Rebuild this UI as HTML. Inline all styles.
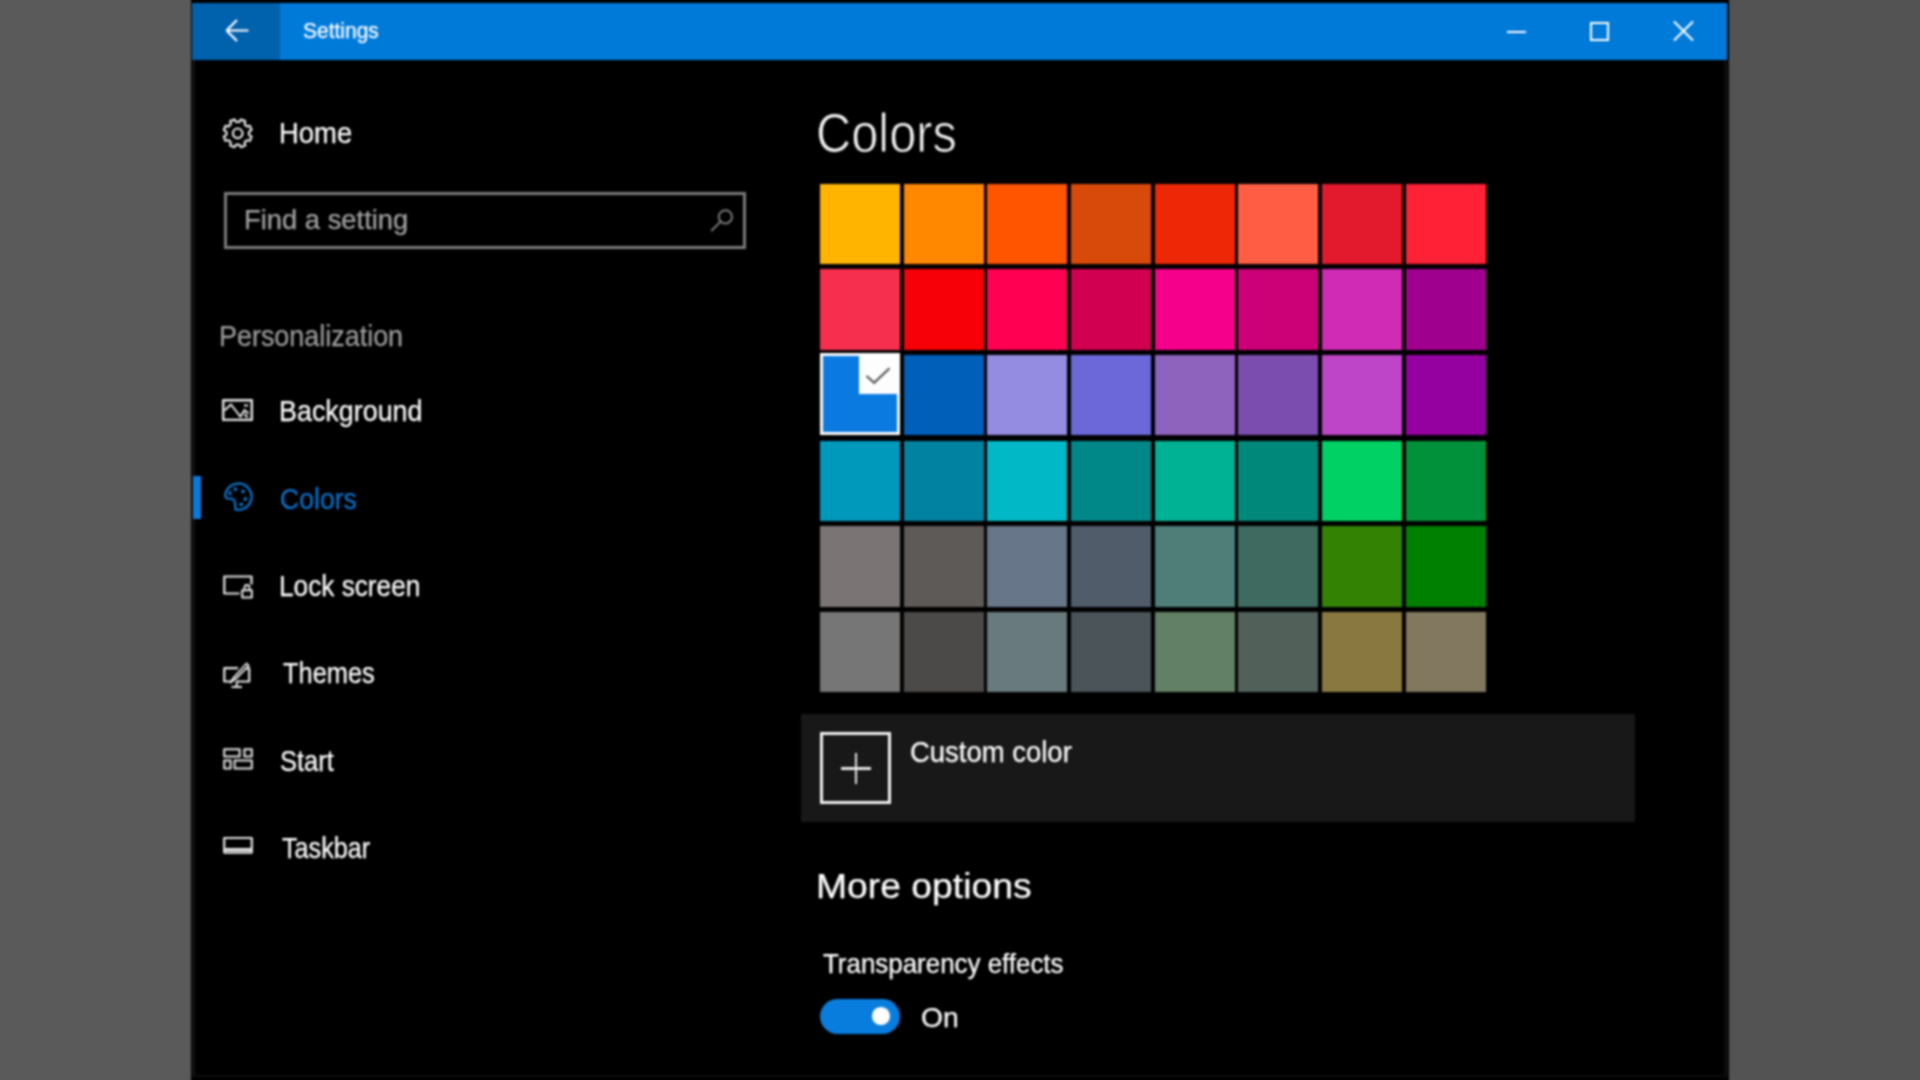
<!DOCTYPE html>
<html>
<head>
<meta charset="utf-8">
<style>
html,body{margin:0;padding:0;width:1920px;height:1080px;overflow:hidden;background:#535353;}
body{position:relative;font-family:"Liberation Sans",sans-serif;}
.abs{position:absolute;}
#wrap{position:absolute;left:-30px;top:-30px;width:1980px;height:1140px;filter:blur(0.8px);}
#inner{position:absolute;left:30px;top:30px;width:1920px;height:1080px;}
.t{position:absolute;white-space:nowrap;line-height:1;transform-origin:0 0;color:#fff;}
#win{position:absolute;left:191px;top:-30px;width:1538px;height:1140px;background:#000;}
#tb{position:absolute;left:192px;top:3px;width:1535px;height:57px;background:#007ad9;}
#back{position:absolute;left:192px;top:3px;width:88px;height:57px;background:#0061ad;}
.sw{position:absolute;width:80.2px;height:80.6px;}
</style>
</head>
<body>
<div id="wrap"><div id="inner">
<div class="abs" style="left:-30px;top:-30px;width:221px;height:1140px;background:#5a5a5a"></div>
<div class="abs" style="left:1729px;top:-30px;width:221px;height:1140px;background:#535353"></div>
<div id="win"></div>
<div class="abs" style="left:192px;top:60px;width:2.5px;height:1017px;background:#121212"></div>
<div class="abs" style="left:192px;top:1075px;width:1535px;height:2px;background:#0d0d0d"></div>
<div class="abs" style="left:1724px;top:60px;width:4px;height:1017px;background:#0c0c0c"></div>
<div id="tb"></div>
<div id="back"></div>


<!-- window controls -->
<div class="abs" style="left:1507px;top:31px;width:19px;height:2px;background:#fff"></div>
<div class="abs" style="left:1590px;top:22px;width:15px;height:15px;border:2px solid #fff"></div>

<!-- sidebar -->

<div class="abs" style="left:223.7px;top:192.1px;width:516.6px;height:51.2px;border:3px solid #7a7a7a"></div>


<div class="abs" style="left:193px;top:476px;width:8px;height:43px;background:#0a7ad8"></div>

<!-- content -->

<!--GRID--><div id="grid">
<div class="sw" style="left:819.8px;top:183.7px;background:#FFB400"></div>
<div class="sw" style="left:903.5px;top:183.7px;background:#FF8800"></div>
<div class="sw" style="left:987.2px;top:183.7px;background:#FF5400"></div>
<div class="sw" style="left:1070.9px;top:183.7px;background:#D84A0A"></div>
<div class="sw" style="left:1154.6px;top:183.7px;background:#EE2806"></div>
<div class="sw" style="left:1238.3px;top:183.7px;background:#FF5E45"></div>
<div class="sw" style="left:1322.0px;top:183.7px;background:#E31A2E"></div>
<div class="sw" style="left:1405.7px;top:183.7px;background:#FF2136"></div>
<div class="sw" style="left:819.8px;top:269.3px;background:#F72F4E"></div>
<div class="sw" style="left:903.5px;top:269.3px;background:#F80007"></div>
<div class="sw" style="left:987.2px;top:269.3px;background:#FF0052"></div>
<div class="sw" style="left:1070.9px;top:269.3px;background:#D10050"></div>
<div class="sw" style="left:1154.6px;top:269.3px;background:#F4008A"></div>
<div class="sw" style="left:1238.3px;top:269.3px;background:#CC0077"></div>
<div class="sw" style="left:1322.0px;top:269.3px;background:#D02BB4"></div>
<div class="sw" style="left:1405.7px;top:269.3px;background:#A0008E"></div>
<div class="sw" style="left:819.7px;top:352.9px;height:82.4px;width:80.1px;background:#fdfdfd"></div>
<div class="abs" style="left:823.0px;top:356.0px;width:73.6px;height:75.6px;background:#0a79e0"></div>
<div class="abs" style="left:859.0px;top:356.0px;width:37.6px;height:37.6px;background:#fdfdfd"></div>
<svg class="abs" style="left:859.8px;top:356.9px" width="36" height="36" viewBox="0 0 36 36"><path d="M6.5 19 L14.2 25.8 L29.5 11.2" fill="none" stroke="#555" stroke-width="2.2"/></svg>
<div class="sw" style="left:903.5px;top:354.9px;background:#005FB8"></div>
<div class="sw" style="left:987.2px;top:354.9px;background:#938CE0"></div>
<div class="sw" style="left:1070.9px;top:354.9px;background:#6C68D9"></div>
<div class="sw" style="left:1154.6px;top:354.9px;background:#8E63BE"></div>
<div class="sw" style="left:1238.3px;top:354.9px;background:#7B4DAE"></div>
<div class="sw" style="left:1322.0px;top:354.9px;background:#BE45C8"></div>
<div class="sw" style="left:1405.7px;top:354.9px;background:#9500A0"></div>
<div class="sw" style="left:819.8px;top:440.5px;background:#0099BC"></div>
<div class="sw" style="left:903.5px;top:440.5px;background:#0082A0"></div>
<div class="sw" style="left:987.2px;top:440.5px;background:#00B8C6"></div>
<div class="sw" style="left:1070.9px;top:440.5px;background:#008788"></div>
<div class="sw" style="left:1154.6px;top:440.5px;background:#00B294"></div>
<div class="sw" style="left:1238.3px;top:440.5px;background:#00887A"></div>
<div class="sw" style="left:1322.0px;top:440.5px;background:#00D164"></div>
<div class="sw" style="left:1405.7px;top:440.5px;background:#00913A"></div>
<div class="sw" style="left:819.8px;top:526.1px;background:#7A7574"></div>
<div class="sw" style="left:903.5px;top:526.1px;background:#5D5A58"></div>
<div class="sw" style="left:987.2px;top:526.1px;background:#68768A"></div>
<div class="sw" style="left:1070.9px;top:526.1px;background:#515C6B"></div>
<div class="sw" style="left:1154.6px;top:526.1px;background:#4E7E77"></div>
<div class="sw" style="left:1238.3px;top:526.1px;background:#3F6A60"></div>
<div class="sw" style="left:1322.0px;top:526.1px;background:#348204"></div>
<div class="sw" style="left:1405.7px;top:526.1px;background:#008000"></div>
<div class="sw" style="left:819.8px;top:611.7px;background:#767676"></div>
<div class="sw" style="left:903.5px;top:611.7px;background:#4C4A48"></div>
<div class="sw" style="left:987.2px;top:611.7px;background:#687A7E"></div>
<div class="sw" style="left:1070.9px;top:611.7px;background:#4A5459"></div>
<div class="sw" style="left:1154.6px;top:611.7px;background:#628065"></div>
<div class="sw" style="left:1238.3px;top:611.7px;background:#52605A"></div>
<div class="sw" style="left:1322.0px;top:611.7px;background:#897941"></div>
<div class="sw" style="left:1405.7px;top:611.7px;background:#82775F"></div>
</div><!--/GRID-->

<div class="abs" style="left:800.6px;top:713.5px;width:834.2px;height:108.9px;background:#181818"></div>
<div class="abs" style="left:819.9px;top:731.5px;width:65.2px;height:66.8px;border:3.4px solid #f2f2f2"></div>
<div class="abs" style="left:840.8px;top:767.2px;width:30.5px;height:2.4px;background:#e8e8e8"></div>
<div class="abs" style="left:854.8px;top:753.2px;width:2.4px;height:30.5px;background:#e8e8e8"></div>

<div class="abs" style="left:820px;top:999px;width:80px;height:35px;border-radius:17.5px;background:#097ddd"></div>
<div class="abs" style="left:872.3px;top:1007.3px;width:17.6px;height:17.6px;border-radius:50%;background:#fff"></div>
<!--ICONS-->
<svg class="abs" style="left:0;top:0" width="1920" height="1080" viewBox="0 0 1920 1080">
 <g fill="none" stroke="#fff" stroke-width="2.2" stroke-linecap="butt">
  <!-- back arrow -->
  <path d="M226.5 30.5 H248.5 M226.5 30.5 L237 20 M226.5 30.5 L237 41" stroke-width="2.2"/>
  <!-- close -->
  <path d="M1674 21.5 L1693 40.5 M1693 21.5 L1674 40.5" stroke-width="2"/>
 </g>
 <g fill="none" stroke="#e6e6e6" stroke-width="2" stroke-linejoin="round">
  <!-- gear -->
  <path d="M239.19 122.00 L241.04 119.40 L245.17 121.11 L244.64 124.26 L246.74 126.36 L249.89 125.83 L251.60 129.96 L249.00 131.81 L249.00 134.79 L251.60 136.64 L249.89 140.77 L246.74 140.24 L244.64 142.34 L245.17 145.49 L241.04 147.20 L239.19 144.60 L236.21 144.60 L234.36 147.20 L230.23 145.49 L230.76 142.34 L228.66 140.24 L225.51 140.77 L223.80 136.64 L226.40 134.79 L226.40 131.81 L223.80 129.96 L225.51 125.83 L228.66 126.36 L230.76 124.26 L230.23 121.11 L234.36 119.40 L236.21 122.00 Z" stroke-width="2.2"/>
  <circle cx="237.7" cy="133.3" r="4.8" stroke-width="2.2"/>
  <!-- background -->
  <rect x="223.2" y="400.3" width="28.6" height="19.6" stroke-width="2.4"/>
  <path d="M224.5 410.5 L231 404.5 L241 417.5 M240.5 416.5 L244.5 410 L248.5 413.5 M244.5 413.8 L247.5 417.5 M244 405.5 H248" stroke-width="2"/>
  <!-- lock screen -->
  <path d="M239.5 593.5 H224.3 V576.5 H251.5 V584.5" stroke-width="2.2"/>
  <rect x="242.2" y="590.2" width="9.6" height="7.4" stroke-width="2"/>
  <path d="M244.5 590 V587.5 A2.5 2.5 0 0 1 249.5 587.5 V590" stroke-width="1.8"/>
  <!-- themes -->
  <path d="M232 681.5 H224.3 V668.2 H238" stroke-width="2.2"/>
  <path d="M245.5 668.5 H249.2 V681.5 H236" stroke-width="2.2"/>
  <path d="M236.7 682 V686.5 M231.5 687 H242" stroke-width="2"/>
  <path d="M230.5 682.5 L234 677 L246.5 663.5 L248.8 665.8 L236 678.5 Z" stroke-width="1.8"/>
  <!-- start -->
  <rect x="224.2" y="749.2" width="15.4" height="7.2" stroke-width="2"/>
  <rect x="244.4" y="749.2" width="7.4" height="7.2" stroke-width="2"/>
  <rect x="224.2" y="760.6" width="6.4" height="7.8" stroke-width="2"/>
  <rect x="234.6" y="760.6" width="17.2" height="7.8" stroke-width="2"/>
  <!-- taskbar -->
  <rect x="224.2" y="838" width="27.6" height="14.6" stroke-width="2.2"/>
  <path d="M224.2 849.5 H251.8" stroke-width="3"/>
 </g>
 <!-- search -->
 <g fill="none" stroke="#7a7a7a" stroke-width="2">
  <circle cx="725.4" cy="216.8" r="6.6"/>
  <path d="M720.6 221.6 L711.2 231"/>
 </g>
 <!-- palette -->
 <g fill="none" stroke="#0c6fc2" stroke-width="2.4" stroke-linejoin="round" stroke-linecap="round">
  <path d="M235.6 509.6 A13.2 13.2 0 1 0 225.3 494.6 C224.9 497.8 226.4 499 229.6 498.6 C233.4 498.2 235 500.4 235 503.4 Z"/>
 </g>
 <g fill="#0c6fc2">
  <circle cx="235.4" cy="489.2" r="1.9"/><circle cx="230" cy="493.2" r="1.9"/>
  <circle cx="243" cy="491.4" r="1.9"/><circle cx="245.4" cy="499" r="1.9"/><circle cx="241.2" cy="504.4" r="1.9"/>
 </g>
</svg>
<!--/ICONS-->
<!--TEXTS-->
<div class="t" id="settings" style="left:302.90px;top:21.29px;font-size:21.30px;color:#ffffff;transform:scaleX(0.9856);-webkit-text-stroke:0.25px #ffffff">Settings</div>
<div class="t" id="home" style="left:279.20px;top:118.30px;font-size:29.30px;color:#ffffff;transform:scaleX(0.9363);-webkit-text-stroke:0.25px #ffffff">Home</div>
<div class="t" id="find" style="left:243.90px;top:207.20px;font-size:26.92px;color:#a3a3a3;transform:scaleX(1.0169);-webkit-text-stroke:0.25px #a3a3a3">Find a setting</div>
<div class="t" id="pers" style="left:219.40px;top:320.90px;font-size:29.30px;color:#9c9c9c;transform:scaleX(0.9190);-webkit-text-stroke:0.25px #9c9c9c">Personalization</div>
<div class="t" id="bg" style="left:279.20px;top:395.60px;font-size:29.30px;color:#ffffff;transform:scaleX(0.9178);-webkit-text-stroke:0.25px #ffffff">Background</div>
<div class="t" id="colnav" style="left:280.20px;top:483.50px;font-size:29.30px;color:#0f70c8;transform:scaleX(0.9077);-webkit-text-stroke:0.25px #0f70c8">Colors</div>
<div class="t" id="lock" style="left:278.80px;top:570.70px;font-size:29.30px;color:#ffffff;transform:scaleX(0.8947);-webkit-text-stroke:0.25px #ffffff">Lock screen</div>
<div class="t" id="themes" style="left:282.70px;top:657.90px;font-size:29.30px;color:#ffffff;transform:scaleX(0.8666);-webkit-text-stroke:0.25px #ffffff">Themes</div>
<div class="t" id="start" style="left:280.40px;top:745.70px;font-size:29.30px;color:#ffffff;transform:scaleX(0.8702);-webkit-text-stroke:0.25px #ffffff">Start</div>
<div class="t" id="taskbar" style="left:282.10px;top:832.90px;font-size:29.30px;color:#ffffff;transform:scaleX(0.8602);-webkit-text-stroke:0.25px #ffffff">Taskbar</div>
<div class="t" id="title" style="left:815.90px;top:105.70px;font-size:55.25px;color:#f4f4f4;transform:scaleX(0.8829);-webkit-text-stroke:1.0px #000">Colors</div>
<div class="t" id="custom" style="left:910.20px;top:737.20px;font-size:30.26px;color:#ffffff;transform:scaleX(0.9079);-webkit-text-stroke:0.25px #ffffff">Custom color</div>
<div class="t" id="more" style="left:816.40px;top:869.00px;font-size:34.85px;color:#ffffff;transform:scaleX(1.0711);-webkit-text-stroke:0.25px #ffffff">More options</div>
<div class="t" id="transp" style="left:822.80px;top:949.70px;font-size:27.08px;color:#ffffff;transform:scaleX(0.9569);-webkit-text-stroke:0.25px #ffffff">Transparency effects</div>
<div class="t" id="on" style="left:920.80px;top:1002.90px;font-size:28.33px;color:#ffffff;transform:scaleX(0.9976);-webkit-text-stroke:0.25px #ffffff">On</div>
<!--/TEXTS-->
</div></div>
</body>
</html>
